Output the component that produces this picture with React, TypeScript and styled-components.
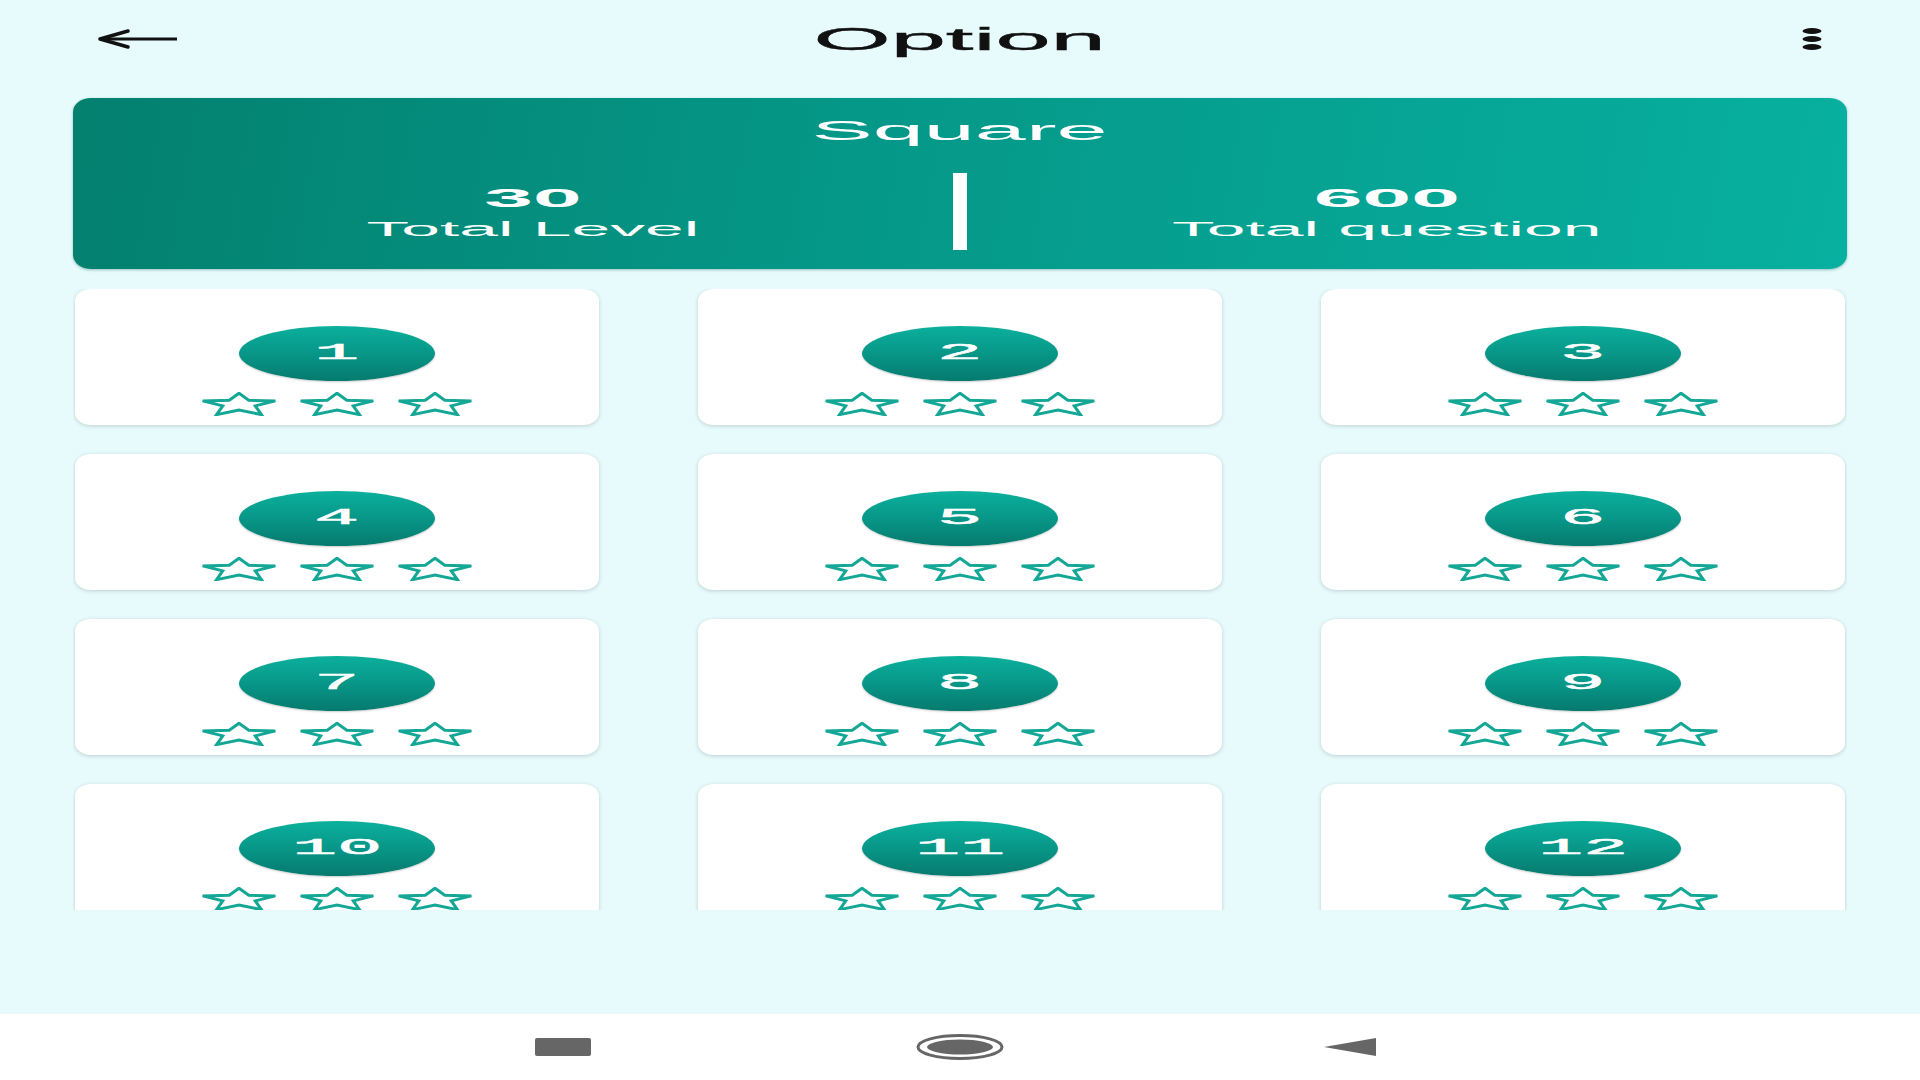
import styled, { createGlobalStyle } from 'styled-components';

const GlobalStyle = createGlobalStyle`
  html, body {
    margin: 0;
    padding: 0;
    background: #e7fbfd;
    font-family: "Liberation Sans", Arial, sans-serif;
  }
`;

const levels = Array.from({ length: 12 }, (_, i) => i + 1);

const BackArrow = () => (
  <svg width="84" height="20" viewBox="0 0 84 20">
    <path d="M5 10 H80" stroke="#111" strokeWidth="3" />
    <path d="M3 10 L31 2 M3 10 L31 18" stroke="#111" strokeWidth="3.4" strokeLinecap="round" />
  </svg>
);

const Kebab = () => (
  <svg width="20" height="22" viewBox="0 0 20 22">
    <ellipse cx="10" cy="3" rx="9.5" ry="3" fill="#111" />
    <ellipse cx="10" cy="11" rx="9.5" ry="3" fill="#111" />
    <ellipse cx="10" cy="19" rx="9.5" ry="3" fill="#111" />
  </svg>
);

const Star = () => (
  <svg width="78" height="24" viewBox="0 0 24 24" preserveAspectRatio="none">
    <path
      d="M12 1.2 L15 8.3 L23.2 8.9 L17 13.9 L18.9 22.6 L12 18.1 L5.1 22.6 L7 13.9 L0.8 8.9 L9 8.3 Z"
      fill="#fff"
      stroke="#15a796"
      strokeWidth="3"
      strokeLinejoin="miter"
      vectorEffect="non-scaling-stroke"
    />
  </svg>
);

const HomeIcon = () => (
  <svg width="88" height="26" viewBox="0 0 88 26">
    <ellipse cx="44" cy="13" rx="42" ry="11.5" fill="none" stroke="#666" strokeWidth="3" />
    <ellipse cx="44" cy="13" rx="33" ry="7.5" fill="#666" />
  </svg>
);

const BackTriangle = () => (
  <svg width="56" height="20" viewBox="0 0 56 20">
    <polygon points="2,10 54,1 54,19" fill="#666" />
  </svg>
);

export default function App() {
  return (
    <>
      <GlobalStyle />
      <Screen>
        <Header>
          <IconButton>
            <BackArrow />
          </IconButton>
          <Title>
            <Wide $scale={3.2}>Option</Wide>
          </Title>
          <IconButton>
            <Kebab />
          </IconButton>
        </Header>

        <Content>
          <Banner>
            <BannerTitle>
              <Wide $scale={3.4}>Square</Wide>
            </BannerTitle>
            <StatsRow>
              <Stat>
                <StatValue>
                  <Wide $scale={3.5}>30</Wide>
                </StatValue>
                <StatLabel>
                  <Wide $scale={3.48}>Total Level</Wide>
                </StatLabel>
              </Stat>
              <Divider />
              <Stat>
                <StatValue>
                  <Wide $scale={3.5}>600</Wide>
                </StatValue>
                <StatLabel>
                  <Wide $scale={3.48}>Total question</Wide>
                </StatLabel>
              </Stat>
            </StatsRow>
          </Banner>

          <LevelGrid>
            {levels.map((n) => (
              <LevelCard key={n}>
                <LevelBadge>
                  <Wide $scale={3.4}>{n}</Wide>
                </LevelBadge>
                <Stars>
                  <Star />
                  <Star />
                  <Star />
                </Stars>
              </LevelCard>
            ))}
          </LevelGrid>
        </Content>

        <NavBar>
          <NavSquare />
          <HomeIcon />
          <BackTriangle />
        </NavBar>
      </Screen>
    </>
  );
}

const Screen = styled.div`
  height: 100vh;
  display: flex;
  flex-direction: column;
  overflow: hidden;
`;

const Header = styled.header`
  height: 78px;
  display: flex;
  align-items: center;
  justify-content: space-between;
  padding: 0 98px 0 97px;
`;

const IconButton = styled.div`
  display: flex;
  align-items: center;
  width: 84px;

  &:last-child {
    justify-content: flex-end;
  }
`;

const Wide = styled.span<{ $scale: number }>`
  display: inline-block;
  transform: scaleX(${(p) => p.$scale});
  transform-origin: center;
  white-space: nowrap;
`;

const Title = styled.h1`
  margin: 0;
  font-size: 31px;
  font-weight: 400;
  color: #111;
  line-height: 1;
  -webkit-text-stroke: 0.4px #111;
`;

const Content = styled.main`
  flex: 1;
  padding: 20px 73px 0;
  display: flex;
  flex-direction: column;
`;

const Banner = styled.section`
  height: 171px;
  box-sizing: border-box;
  border-radius: 18px / 14px;
  background: linear-gradient(100deg, #04806f 0%, #059888 45%, #07b0a0 100%);
  box-shadow: 0 1px 3px rgba(0, 80, 70, 0.35);
  color: #fff;
  padding: 16px 40px 0;
  display: flex;
  flex-direction: column;
  align-items: center;
`;

const BannerTitle = styled.h2`
  margin: 0;
  font-size: 27px;
  font-weight: 400;
  line-height: 34px;
`;

const StatsRow = styled.div`
  align-self: stretch;
  margin-top: 25px;
  display: flex;
  align-items: center;
`;

const Stat = styled.div`
  flex: 1;
  display: flex;
  flex-direction: column;
  align-items: center;
  padding-top: 2px;
`;

const StatValue = styled.div`
  font-size: 25px;
  font-weight: 700;
  line-height: 26px;
`;

const StatLabel = styled.div`
  font-size: 20px;
  line-height: 24px;
  margin-top: 6px;
`;

const Divider = styled.div`
  width: 14px;
  height: 77px;
  background: #fff;
`;

const LevelGrid = styled.div`
  margin-top: 20px;
  height: 621px;
  overflow: hidden;
  padding: 0 2px;
  display: grid;
  grid-template-columns: repeat(3, 524px);
  grid-auto-rows: 136px;
  justify-content: space-between;
  row-gap: 29px;
`;

const LevelCard = styled.div`
  background: #fff;
  border-radius: 16px / 12px;
  box-shadow: 0 1px 4px rgba(0, 0, 0, 0.18);
  display: flex;
  flex-direction: column;
  align-items: center;
  padding-top: 37px;
  box-sizing: border-box;
`;

const LevelBadge = styled.div`
  width: 196px;
  height: 55px;
  border-radius: 50%;
  background: linear-gradient(180deg, #0bb09d 0%, #079485 55%, #067a6e 100%);
  box-shadow: 0 1px 2px rgba(0, 0, 0, 0.2);
  color: #fff;
  font-family: "Liberation Mono", "Courier New", monospace;
  font-size: 22px;
  -webkit-text-stroke: 0.5px #fff;
  display: flex;
  align-items: center;
  justify-content: center;
`;

const Stars = styled.div`
  margin-top: 11px;
  display: flex;
  gap: 20px;
`;

const NavBar = styled.nav`
  height: 66px;
  flex-shrink: 0;
  background: #fff;
  border-top: 1px solid #eef6f6;
  display: flex;
  align-items: center;
  justify-content: center;
  gap: 325px;
  padding-right: 7px;

  & > svg:last-child {
    margin-left: -7px;
  }
`;

const NavSquare = styled.div`
  width: 56px;
  height: 18px;
  border-radius: 2px;
  background: #666;
`;
